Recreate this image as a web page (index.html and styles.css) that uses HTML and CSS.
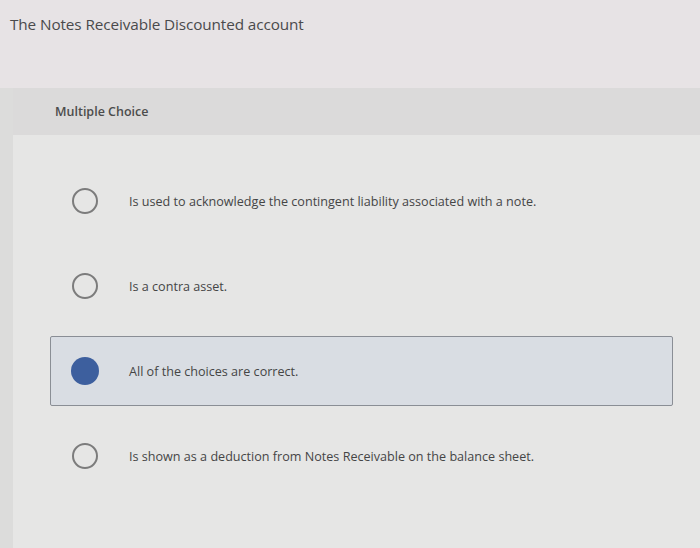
FILE: index.html
```html
<!DOCTYPE html>
<html>
<head>
<meta charset="utf-8">
<link rel="stylesheet" href="styles.css">
</head>
<body>
<div class="page">
  <header class="top">
    <h1 class="title">The Notes Receivable Discounted account</h1>
  </header>
  <section class="panel">
    <div class="panel-head">Multiple Choice</div>
    <div class="options">
      <div class="option"><span class="radio"></span><span class="label">Is used to acknowledge the contingent liability associated with a note.</span></div>
      <div class="option"><span class="radio"></span><span class="label">Is a contra asset.</span></div>
      <div class="option selected"><span class="radio"></span><span class="label">All of the choices are correct.</span></div>
      <div class="option"><span class="radio"></span><span class="label">Is shown as a deduction from Notes Receivable on the balance sheet.</span></div>
    </div>
  </section>
</div>
</body>
</html>
```
FILE: styles.css
```css
html, body {
  margin: 0;
  padding: 0;
}
body {
  width: 700px;
  height: 548px;
  overflow: hidden;
  background: #dcdcdb;
  font-family: "Open Sans", Lato, sans-serif;
  color: #464646;
}
.page {
  display: flex;
  flex-direction: column;
  height: 548px;
}
.top {
  height: 88px;
  background: #e7e3e5;
  box-sizing: border-box;
  padding: 14px 0 0 10px;
}
.title {
  margin: 0;
  font-size: 15.3px;
  font-weight: 400;
  line-height: 20px;
  letter-spacing: -0.1px;
  color: #4a4a4c;
}
.panel {
  flex: 1;
  margin-left: 13px;
  background: #e6e6e5;
  display: flex;
  flex-direction: column;
}
.panel-head {
  height: 47px;
  background: #dbdada;
  box-sizing: border-box;
  padding-left: 42px;
  display: flex;
  align-items: center;
  font-size: 12.5px;
  font-weight: 600;
  color: #4c4c4c;
}
.options {
  display: flex;
  flex-direction: column;
  gap: 15px;
  padding: 31px 27px 0 37px;
}
.option {
  height: 70px;
  box-sizing: border-box;
  display: flex;
  align-items: center;
  padding-left: 21px;
  border: 1px solid transparent;
}
.option.selected {
  background: #d9dde3;
  border-color: #8a8e95;
  border-radius: 2px;
}
.radio {
  width: 26px;
  height: 26px;
  box-sizing: border-box;
  border: 2px solid #7c7c7c;
  border-radius: 50%;
  flex: none;
}
.selected .radio {
  width: 28px;
  height: 28px;
  margin-left: -1px;
  border: none;
  background: #3d5f9e;
}
.label {
  margin-left: 31px;
  font-size: 12.6px;
  color: #454545;
}
.selected .label {
  margin-left: 30px;
}
```
